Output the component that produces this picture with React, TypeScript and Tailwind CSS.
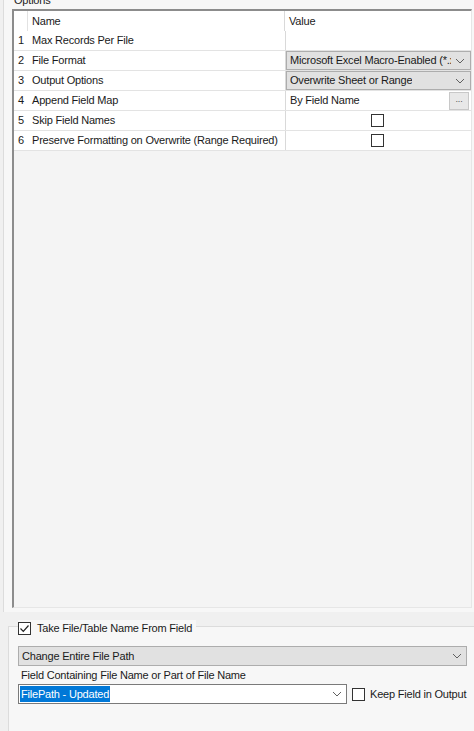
import React from "react";

// ── Small WinForms-style controls ──────────────────────────────────────

function Chevron({ className = "" }: { className?: string }) {
  return (
    <svg viewBox="0 0 10 6" className={`h-[6px] w-[10px] ${className}`} aria-hidden>
      <path d="M1 1l4 4 4-4" fill="none" stroke="#606060" strokeWidth="1" />
    </svg>
  );
}

function CheckBox({ checked = false }: { checked?: boolean }) {
  return (
    <span className="flex size-[13px] shrink-0 items-center justify-center border border-[#333333] bg-white">
      {checked && (
        <svg viewBox="0 0 11 11" className="size-[11px]" aria-hidden>
          <path d="M1.5 5.5l2.8 2.8L9.5 2.5" fill="none" stroke="#222" strokeWidth="1.2" />
        </svg>
      )}
    </span>
  );
}

function DropCell({ text }: { text: string }) {
  return (
    <div className="flex h-[19px] items-center justify-between border border-[#adadad] bg-[#e1e1e1] pl-[3px] pr-[5px]">
      <span className="overflow-hidden whitespace-nowrap">{text}</span>
      <Chevron className="ml-1 shrink-0" />
    </div>
  );
}

type Row = { n: number; name: string; value: React.ReactNode };

const rows: Row[] = [
  { n: 1, name: "Max Records Per File", value: null },
  { n: 2, name: "File Format", value: <DropCell text="Microsoft Excel Macro-Enabled (*.xlsm)" /> },
  { n: 3, name: "Output Options", value: <DropCell text="Overwrite Sheet or Range" /> },
  {
    n: 4,
    name: "Append Field Map",
    value: (
      <div className="flex h-[19px] items-center justify-between pl-[4px] pr-[2px]">
        <span>By Field Name</span>
        <span className="flex h-[18px] w-[20px] items-start justify-center border border-[#c8c8c8] bg-[#e8e8e8] text-[9px] leading-[12px] text-[#555]">
          ...
        </span>
      </div>
    ),
  },
  {
    n: 5,
    name: "Skip Field Names",
    value: (
      <div className="flex h-[19px] items-center justify-center pr-[2px]">
        <CheckBox />
      </div>
    ),
  },
  {
    n: 6,
    name: "Preserve Formatting on Overwrite (Range Required)",
    value: (
      <div className="flex h-[19px] items-center justify-center pr-[2px]">
        <CheckBox />
      </div>
    ),
  },
];

export default function App() {
  return (
    <div className="h-[731px] w-[474px] overflow-hidden bg-[#f0f0f0] font-['Liberation_Sans',Arial,sans-serif] text-[11px] tracking-[-0.2px] text-[#1a1a1a]">
      {/* Options group */}
      <div className="ml-[3px] flex h-[612px] flex-col border-l border-[#dcdcdc] bg-[#f7f7f7] pt-[1px]">
        <div className="-mt-[8px] ml-[10px] h-[16px] leading-[14px] text-[#222]">Options</div>

        {/* Property grid */}
        <div className="ml-[8px] flex h-[599px] w-[460px] flex-col border-b border-l-2 border-r border-t-2 border-b-[#e6e6e6] border-l-[#8c8c8c] border-r-[#e6e6e6] border-t-[#8c8c8c] bg-[#f4f4f4]">
          {/* header */}
          <div className="flex h-[20px] bg-white">
            <div className="w-[14px] border-r border-[#e2e2e2]" />
            <div className="w-[256px] pl-[4px] leading-[20px]">Name</div>
            <div className="flex-1 border-l border-[#d9d9d9] pl-[4px] leading-[20px]">Value</div>
          </div>
          {rows.map((r) => (
            <div key={r.n} className="flex h-[20px] border-b border-[#e3e3e3] bg-white">
              <div className="w-[14px] pl-[4px] leading-[19px]">{r.n}</div>
              <div className="w-[257px] whitespace-nowrap pl-[4px] leading-[19px]">{r.name}</div>
              <div className="min-w-0 flex-1 overflow-hidden border-l border-[#d9d9d9]">{r.value}</div>
            </div>
          ))}
        </div>
      </div>

      {/* Take File/Table Name From Field group */}
      <div className="relative ml-[8px] mt-[14px] h-[110px] border-l border-t border-[#dcdcdc] bg-[#f7f7f7] pl-[9px] pr-[7px] pt-[19px]">
        <div className="absolute -top-[7px] left-[9px] flex items-center gap-[6px] bg-[#f7f7f7] pr-[4px]">
          <CheckBox checked />
          <span className="whitespace-nowrap">Take File/Table Name From Field</span>
        </div>

        <div className="flex h-[20px] items-center justify-between border border-[#adadad] bg-[#e1e1e1] pl-[3px] pr-[4px]">
          <span>Change Entire File Path</span>
          <Chevron />
        </div>

        <div className="ml-[3px] h-[18px] whitespace-nowrap leading-[18px]">
          Field Containing File Name or Part of File Name
        </div>

        <div className="flex h-[20px] items-center">
          <div className="flex h-[20px] w-[329px] shrink-0 items-center justify-between border border-[#7a7a7a] bg-white pl-[1px] pr-[4px]">
            <span className="whitespace-nowrap bg-[#0078d7] px-[1px] leading-[16px] text-white">FilePath - Updated</span>
            <Chevron />
          </div>
          <div className="ml-[5px] flex items-center gap-[5px]">
            <CheckBox />
            <span className="whitespace-nowrap">Keep Field in Output</span>
          </div>
        </div>
      </div>
    </div>
  );
}
